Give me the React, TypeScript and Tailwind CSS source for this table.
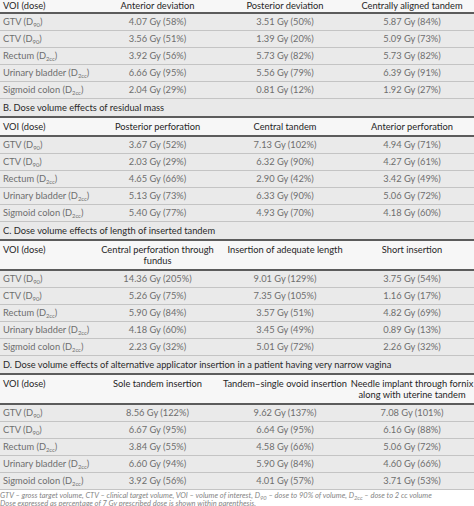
import React from "react";

type Row = { label: string; sub: string; vals: string[] };

const labels: [string, string][] = [
  ["GTV", "90"],
  ["CTV", "90"],
  ["Rectum", "2cc"],
  ["Urinary bladder", "2cc"],
  ["Sigmoid colon", "2cc"],
];

function mk(vals: string[][]): Row[] {
  return labels.map((l, i) => ({ label: l[0], sub: l[1], vals: vals[i] }));
}

const sections: { title?: string; heads: string[][]; rows: Row[] }[] = [
  {
    heads: [["Anterior deviation"], ["Posterior deviation"], ["Centrally aligned tandem"]],
    rows: mk([
      ["4.07 Gy (58%)", "3.51 Gy (50%)", "5.87 Gy (84%)"],
      ["3.56 Gy (51%)", "1.39 Gy (20%)", "5.09 Gy (73%)"],
      ["3.92 Gy (56%)", "5.73 Gy (82%)", "5.73 Gy (82%)"],
      ["6.66 Gy (95%)", "5.56 Gy (79%)", "6.39 Gy (91%)"],
      ["2.04 Gy (29%)", "0.81 Gy (12%)", "1.92 Gy (27%)"],
    ]),
  },
  {
    title: "B. Dose volume effects of residual mass",
    heads: [["Posterior perforation"], ["Central tandem"], ["Anterior perforation"]],
    rows: mk([
      ["3.67 Gy (52%)", "7.13 Gy (102%)", "4.94 Gy (71%)"],
      ["2.03 Gy (29%)", "6.32 Gy (90%)", "4.27 Gy (61%)"],
      ["4.65 Gy (66%)", "2.90 Gy (42%)", "3.42 Gy (49%)"],
      ["5.13 Gy (73%)", "6.33 Gy (90%)", "5.06 Gy (72%)"],
      ["5.40 Gy (77%)", "4.93 Gy (70%)", "4.18 Gy (60%)"],
    ]),
  },
  {
    title: "C. Dose volume effects of length of inserted tandem",
    heads: [["Central perforation through", "fundus"], ["Insertion of adequate length"], ["Short insertion"]],
    rows: mk([
      ["14.36 Gy (205%)", "9.01 Gy (129%)", "3.75 Gy (54%)"],
      ["5.26 Gy (75%)", "7.35 Gy (105%)", "1.16 Gy (17%)"],
      ["5.90 Gy (84%)", "3.57 Gy (51%)", "4.82 Gy (69%)"],
      ["4.18 Gy (60%)", "3.45 Gy (49%)", "0.89 Gy (13%)"],
      ["2.23 Gy (32%)", "5.01 Gy (72%)", "2.26 Gy (32%)"],
    ]),
  },
  {
    title: "D. Dose volume effects of alternative applicator insertion in a patient having very narrow vagina",
    heads: [
      ["Sole tandem insertion"],
      ["Tandem–single ovoid insertion"],
      ["Needle implant through fornix", "along with uterine tandem"],
    ],
    rows: mk([
      ["8.56 Gy (122%)", "9.62 Gy (137%)", "7.08 Gy (101%)"],
      ["6.67 Gy (95%)", "6.64 Gy (95%)", "6.16 Gy (88%)"],
      ["3.84 Gy (55%)", "4.58 Gy (66%)", "5.06 Gy (72%)"],
      ["6.60 Gy (94%)", "5.90 Gy (84%)", "4.60 Gy (66%)"],
      ["3.92 Gy (56%)", "4.01 Gy (57%)", "3.71 Gy (53%)"],
    ]),
  },
];

const grid = "grid grid-cols-[95px_125px_130px_124px]";

function Sub({ s }: { s: string }) {
  return <span className="text-[5.8px] relative top-[2px] leading-none">{s}</span>;
}

export default function App() {
  return (
    <div
      className="w-[474px] h-[506px] overflow-hidden bg-white text-[9.3px]"
      style={{ fontFamily: "Lato, 'Open Sans', sans-serif" }}
    >
      {sections.map((sec, si) => {
        const two = sec.heads.some((h) => h.length > 1);
        return (
          <div key={si}>
            {sec.title && (
              <div className="h-[19px] bg-[#e9e9e9] border-b-2 border-[#5c5c5c] flex items-center pl-[3px] text-[#2a2a2a] whitespace-nowrap">
                {sec.title}
              </div>
            )}
            <div
              className={`${grid} bg-[#f7f7f7] border-b-2 border-[#5c5c5c] text-[#262626] leading-[11px] whitespace-nowrap ${
                si === 0 ? "h-[14px] pt-0" : two ? "h-[30px] pt-[3px]" : "h-[19px] pt-[3px]"
              }`}
            >
              <div className="pl-[3px]">VOI (dose)</div>
              {sec.heads.map((h, hi) => (
                <div key={hi} className="text-center">
                  {h.map((line, li) => (
                    <div key={li}>{line}</div>
                  ))}
                </div>
              ))}
            </div>
            {sec.rows.map((r, ri) => (
              <div
                key={ri}
                className={`${grid} h-[17px] items-center bg-[#eaeaea] text-[#6e6e6e] border-b border-[#c4c4c4]`}
              >
                <div className="pl-[3px] whitespace-nowrap">
                  {r.label} (D<Sub s={r.sub} />)
                </div>
                {r.vals.map((v, vi) => (
                  <div key={vi} className="text-center">
                    {v}
                  </div>
                ))}
              </div>
            ))}
          </div>
        );
      })}
      <div className="italic text-[#858585] text-[7.5px] leading-[8px] pt-[2px] whitespace-nowrap">
        <div>
          GTV – gross target volume, CTV – clinical target volume, VOI – volume of interest, D
          <Sub s="90" /> – dose to 90% of volume, D<Sub s="2cc" /> – dose to 2 cc volume
        </div>
        <div>Dose expressed as percentage of 7 Gy prescribed dose is shown within parenthesis.</div>
      </div>
    </div>
  );
}
